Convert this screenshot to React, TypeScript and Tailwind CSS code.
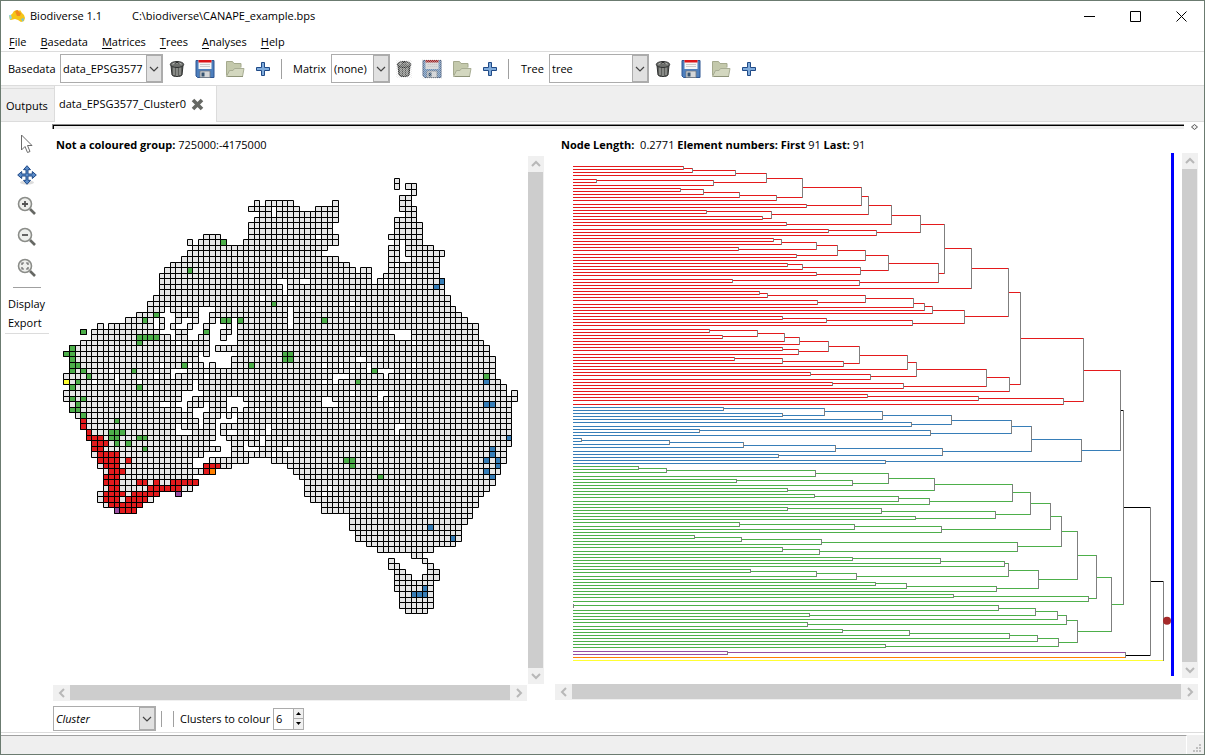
import { useState, type ReactNode } from 'react';

const COLORS = {
  red: '#e41a1c',
  blue: '#377eb8',
  green: '#4daf4a',
  purple: '#984ea3',
  orange: '#ff7f00',
  yellow: '#ffff33',
};

type ColorName = keyof typeof COLORS;

// One entry per grid row, north to south: half-open column ranges that hold cells
const MAP_ROWS = [
  '59-60',
  '59-60 61-63',
  '62-63',
  '60-62',
  '34-35 36-41 48-49 60-62',
  '33-37 38-42 45-49 60-63',
  '35-37 38-49 61-63',
  '34-49 59-63',
  '33-48 59-64',
  '33-48 59-64',
  '25-28 33-45 46-49 58-64',
  '22-23 24-29 32-49 59-60 61-64',
  '23-47 58-60 61-66',
  '22-46 58-60 61-68',
  '21-39 40-49 58-60 62-67',
  '19-51 58-59 60-67',
  '18-52 53-55 58-67',
  '17-55 57-67',
  '17-38 40-42 44-55 56-57 58-61 62-68',
  '17-39 40-68',
  '17-39 40-68',
  '16-35 36-40 41-69',
  '15-51 52-59 60-69',
  '15-18 19-21 22-24 27-40 41-44 45-70',
  '13-17 20-24 26-40 41-71',
  '11-16 17-18 20-21 23-24 26-27 28-30 31-40 41-72',
  '6-7 8-16 17-18 19-20 22-23 25-26 29-30 31-40 41-74',
  '3-4 5-17 20-22 25-26 28-30 31-58 62-74',
  '5-19 20-22 24-26 28-29 31-59 62-74',
  '3-20 21-26 31-56 57-62 63-75',
  '1-26 27-75 75-76',
  '0-24 25-26 31-76',
  '1-24 30-52 54-77',
  '1-17 18-22 23-25 26-27 30-46 47-49 50-54 55-62 63-77',
  '1-8 9-19 22-51 52-54 55-56 59-77',
  '0-9 10-16 17-19 20-25 26-48 51-57 58-61 62-77',
  '0-5 6-9 10-13 14-23 24-46 47-48 49-78',
  '1-23 24-79',
  '0-15 16-21 25-51 52-56 58-79 80-81',
  '0-21 23-29 32-35 36-46 48-56 57-81',
  '1-17 19-20 22-25 26-29 33-46 49-58 59-80',
  '1-21 22-23 26-29 30-31 32-34 35-80',
  '2-23 25-28 29-30 31-39 40-80',
  '3-21 22-24 25-27 31-80',
  '3-20 21-24 25-27 28-36 37-52 53-59 61-80',
  '4-20 23-27 28-29 31-33 34-36 37-59 60-80',
  '4-27 29-35 36-80',
  '5-26 30-32 33-35 36-80',
  '5-28 30-32 35-39 41-79',
  '5-25 30-37 38-54 55-79',
  '6-23 26-33 37-79',
  '6-23 25-30 40-78',
  '7-25 25-27 41-78',
  '7-23 42-77',
  '7-24 43-77',
  '7-23 43-47 48-60 61-76',
  '6-17 20-21 43-46 47-75',
  '6-16 44-74',
  '7-14 46-74',
  '9-13 46-73',
  '51-73',
  '51-72',
  '51-71',
  '52-71',
  '52-71',
  '54-70',
  '56-66',
  '62-64',
  '58-59 64-65',
  '58-60 65-66',
  '59-61 65-67',
  '59-62 64-67',
  '59-66',
  '59-66',
  '60-66',
  '60-66',
  '60-66',
  '61-65',
];

// row:col,col,... for every coloured cell
const MAP_COLORED: Record<ColorName, string> = {
  green:
    '11:28 16:22 22:37 24:16 25:14,28,29,31,46 27:3,25 28:13,14,15,16 29:13 30:1 31:0,1,39,40 32:1,39,40 33:1,2,21,33 34:1,3,12,55 35:4,75 36:2,52 37:1,13 39:1,3 40:2 41:1,2 42:3 43:9 45:8,9,10 46:8,9,13,14 47:9,11 48:14 50:50,51 51:51 53:56',
  blue: '18:67 19:66 36:75 40:75,76 46:79 48:76 49:76 50:75,77 51:77 52:75 53:76 62:65 64:69 73:64 74:62,63,64',
  red: '43:3 44:3 45:4 46:4,5,6 47:5,6,7 48:5,6 49:6,7,8,9 50:6,7,8,9,11 51:7,8,9,25,26,27 52:8,9,10,25 53:7,8,9 54:7,8,9,13,14,16,19,20,21,22,23 55:8,9,15,16,17,18,19,20 56:7,8,9,10,12,13,14,15,16 57:7,8,9,11,12,13,14 58:8,9,10,11,12,13 59:10,11,12',
  purple: '56:20 59:9',
  orange: '52:26',
  yellow: '36:0',
};

const colX = (c: number) => Math.floor(63.85 + 5.6 * c);
const rowY = (r: number) => Math.floor(178.25 + 5.585 * r);

function cellPath(r: number, c: number) {
  const x = colX(c);
  const y = rowY(r);
  return `M${x + 0.5} ${y + 0.5}H${colX(c + 1) + 0.5}V${rowY(r + 1) + 0.5}H${x + 0.5}Z`;
}

const basePath = MAP_ROWS.flatMap((row, r) =>
  row.split(' ').flatMap((range) => {
    const [from, to] = range.split('-').map(Number);
    return Array.from({ length: to - from }, (_, i) => cellPath(r, from + i));
  }),
).join('');

const coloredPaths = (Object.keys(MAP_COLORED) as ColorName[]).map((name) => ({
  name,
  d: MAP_COLORED[name]
    .split(' ')
    .flatMap((entry) => {
      const [r, cols] = entry.split(':');
      return cols.split(',').map((c) => cellPath(Number(r), Number(c)));
    })
    .join(''),
}));

// Clusters in postfix notation: "." is a leaf, a number joins the last two nodes at that x
const CLUSTERS: { color: ColorName; nodes: string }[] = [
  {
    color: 'red',
    nodes: `. . 683 . 692 . 735 . . 596 . 713 766 . . 680 . 703 . 739 . 776 802 . . 806 861
      . . 706 . . 762 771 868 . . 786 891 . . 828 . 876 920
      . . 773 . 781 . . 738 816 . . 796 837 . 865 . . 787 . 802 . . 816 860 888 . . 732 . 859 938 944
      . 971 . . 759 . 767 . . 817 865 . 913 . 924 . 932 . . 782 . 826 . 912 964 1008
      . . 709 . . 722 757 . 784 . 799 . . 782 . 798 828 . . 734 . 782 . 843 859 . 907
      . . 810 . 870 916 . . 832 . 903 986 . 1009 1020 . . 867 . 978 . 1063 1083`,
  },
  {
    color: 'blue',
    nodes: `. . 723 . . 782 824 . 882 . . 911 951 . . 699 . 930 1011
      . . 581 . 669 . 743 . 835 . . 778 942 1031 . . 885 1081`,
  },
  {
    color: 'green',
    nodes: `. . 638 . 666 . 815 . . 736 . 852 888 . . 787 934 . . 814 . 898 . 929 1012
      . . 787 . 881 . . 915 995 1030 . . 739 . 854 . 941 1050
      . . 694 . 741 . 821 . . 782 . 819 1017 1061 . . 852 . 940 . 1004
      . . 750 . 816 . 856 1008 . . 875 . 906 . 996 1038 1077 . . 953 . 1088 1096
      . . 573 . 998 . . 809 1035 . 1057 . . 807 1066
      . . 842 . 909 . 1009 . 1037 . . 885 1058 1077 1111`,
  },
  { color: 'purple', nodes: '. . 727' },
  { color: 'orange', nodes: '.' },
  { color: 'yellow', nodes: '.' },
];

const TREE_LEFT = 573;
const TREE_TOP = 166;
const TREE_BOTTOM = 660;

type TreeNode = { x: number; y: number; color: string };
type Segment = { d: string; color: string };

function buildTree() {
  const segments: Segment[] = [];
  const bars: Segment[] = [];
  const leafCount = CLUSTERS.reduce((n, c) => n + c.nodes.split('.').length - 1, 0);
  const step = (TREE_BOTTOM - TREE_TOP) / (leafCount - 1);
  let leaf = 0;

  const join = (a: TreeNode, b: TreeNode, x: number, color: string): TreeNode => {
    for (const child of [a, b]) {
      segments.push({ d: `M${child.x} ${Math.round(child.y) + 0.5}H${x}`, color: child.color });
    }
    bars.push({ d: `M${x + 0.5} ${Math.round(a.y)}V${Math.round(b.y) + 1}`, color: '#7f7f7f' });
    return { x, y: (a.y + b.y) / 2, color };
  };

  const [red, blue, green, purple, orange, yellow] = CLUSTERS.map((cluster) => {
    const color = COLORS[cluster.color];
    const stack: TreeNode[] = [];
    for (const token of cluster.nodes.split(/\s+/)) {
      if (token === '.') {
        stack.push({ x: TREE_LEFT, y: TREE_TOP + step * leaf++, color });
      } else {
        const b = stack.pop()!;
        const a = stack.pop()!;
        stack.push(join(a, b, Number(token), color));
      }
    }
    return stack[0];
  });

  const black = '#000000';
  const upper = join(join(red, blue, 1120, black), green, 1123, black);
  const lower = join(purple, orange, 1125, black);
  const root = join(join(upper, lower, 1150, black), yellow, 1163, black);
  return { lines: [...segments, ...bars], root };
}

const tree = buildTree();

function DitherOverlay({ width, height }: { width: number; height: number }) {
  return (
    <>
      <defs>
        <pattern id="dither" width="2" height="2" patternUnits="userSpaceOnUse">
          <path d="M0 0h1v1H0zM1 1h1v1H1z" fill="#ddd" fillOpacity="0.5" />
        </pattern>
      </defs>
      <rect width={width} height={height} fill="url(#dither)" />
    </>
  );
}

function TrashIcon({ disabled }: { disabled?: boolean }) {
  return (
    <svg width="16" height="18" viewBox="0 0 16 18">
      <path d="M2 5.5h12l-1 9.5c-1 2-9 2-10 0z" fill="#5c5e5b" stroke="#2e3030" />
      <path d="M5 7v8M8 7.5V16M11 7v8" stroke="#a5a7a3" strokeWidth="1.2" />
      <ellipse cx="8" cy="4.5" rx="6.7" ry="3" fill="#6d6f6c" stroke="#2e3030" />
      <path d="M3.5 4.2c1.5-1.5 7-1.7 9 0" stroke="#c3c5c2" fill="none" />
      <path d="M6 3.8c0-1.7 4-1.7 4 0" stroke="#222" fill="none" />
      {disabled && <DitherOverlay width={16} height={18} />}
    </svg>
  );
}

function SaveIcon({ disabled }: { disabled?: boolean }) {
  return (
    <svg width="20" height="20" viewBox="0 0 20 20">
      <path
        d="M1 1.5h18v17H2.5L1 17z"
        fill={disabled ? '#6b8fb8' : '#4d7fbd'}
        stroke={disabled ? '#4a5f80' : '#2d5591'}
      />
      <path d="M3.5 1h13v9h-13z" fill={disabled ? '#d8d8d8' : '#f5f5f5'} />
      <path d="M3.5 1h13v2.5h-13z" fill={disabled ? '#a02628' : '#dc1417'} />
      <path d="M5 5.5h10M5 7.5h10" stroke="#c9c9c9" />
      <path d="M5 12h10v6.5H5z" fill="#d4d6d8" stroke="#6f7780" strokeWidth="0.8" />
      <path d="M6.5 13.5h3v4h-3z" fill="#35526f" />
      {disabled && <DitherOverlay width={20} height={20} />}
    </svg>
  );
}

function FolderIcon() {
  return (
    <svg width="20" height="18" viewBox="0 0 20 18">
      <path d="M1.5 15.500v-14h6l1.500 2h7v4" fill="#c4c9ac" stroke="#a5aa8e" />
      <path d="M1.5 16.500l3-6h3.500l1.500-2h9.500l-1.500 8z" fill="#d3d7bf" stroke="#a8ad94" />
      <path d="M3 16.5h15" stroke="#8f9479" />
    </svg>
  );
}

function PlusIcon() {
  return (
    <svg width="14" height="14" viewBox="0 0 14 14">
      <path d="M5.5 0.5h3v5h5v3h-5v5h-3v-5h-5v-3h5z" fill="#7fabdb" stroke="#204a87" />
    </svg>
  );
}

function Chevron({ dir, weight = 1.2 }: { dir: 'up' | 'down' | 'left' | 'right'; weight?: number }) {
  const d = {
    up: 'M1 7l4-4 4 4',
    down: 'M1 3l4 4 4-4',
    left: 'M7 1L3 5l4 4',
    right: 'M3 1l4 4-4 4',
  }[dir];
  return (
    <svg width="10" height="10" viewBox="0 0 10 10" className="shrink-0">
      <path d={d} fill="none" stroke="currentColor" strokeWidth={weight} />
    </svg>
  );
}

function Combo({ id, value, className, label }: { id: string; value: string; className: string; label?: string }) {
  return (
    <div className={`relative shrink-0 border border-[#acacac] bg-white ${className}`}>
      <select id={id} aria-label={label} className="block h-full w-full appearance-none bg-transparent pr-4 pl-[2px] outline-none">
        <option>{value}</option>
      </select>
      <span className="pointer-events-none absolute inset-y-0 right-0 flex w-4 items-center justify-center border border-[#acacac] bg-[#e1e1e1] text-[#444]">
        <Chevron dir="down" />
      </span>
    </div>
  );
}

function ToolGroup({ name, value, labelClass, comboClass, disabled }: {
  name: string;
  value: string;
  labelClass: string;
  comboClass: string;
  disabled?: boolean;
}) {
  const id = `combo-${name.toLowerCase()}`;
  return (
    <div className="flex shrink-0 items-center">
      <label htmlFor={id} className={labelClass}>{name}</label>
      <Combo id={id} value={value} className={comboClass} />
      <button aria-label={`Delete ${name}`} disabled={disabled} className="flex w-7 justify-center"><TrashIcon disabled={disabled} /></button>
      <button aria-label={`Save ${name}`} disabled={disabled} className="flex w-7 justify-center"><SaveIcon disabled={disabled} /></button>
      <button aria-label={`Open ${name}`} className="flex w-8 justify-center"><FolderIcon /></button>
      <button aria-label={`New ${name}`} className="flex w-6 justify-center"><PlusIcon /></button>
    </div>
  );
}

function ToolSeparator() {
  return <span className="mx-[6px] h-5 w-px shrink-0 bg-[#a0a0a0]" />;
}

function VScroll() {
  return (
    <div className="flex w-4 shrink-0 flex-col bg-[#f0f0f0] text-[#b8b8b8]">
      <button aria-label="Scroll up" className="flex h-4 items-center justify-center"><Chevron dir="up" weight={2} /></button>
      <div className="mr-px flex-1 bg-[#cdcdcd]" />
      <button aria-label="Scroll down" className="flex h-4 items-center justify-center"><Chevron dir="down" weight={2} /></button>
    </div>
  );
}

function HScroll({ className }: { className: string }) {
  return (
    <div className={`flex h-4 bg-[#f0f0f0] text-[#b8b8b8] ${className}`}>
      <button aria-label="Scroll left" className="flex w-[17px] items-center justify-center"><Chevron dir="left" weight={2} /></button>
      <div className="mb-px flex-1 bg-[#cdcdcd]" />
      <button aria-label="Scroll right" className="flex w-[17px] items-center justify-center"><Chevron dir="right" weight={2} /></button>
    </div>
  );
}

function Magnifier({ children }: { children: ReactNode }) {
  return (
    <svg width="20" height="20" viewBox="0 0 20 20" fill="none">
      <path d="M13 13l5 5" stroke="#666864" strokeWidth="2.6" />
      <circle cx="8" cy="8" r="6.5" fill="#eeefec" stroke="#8b8d89" strokeWidth="1.6" />
      {children}
    </svg>
  );
}

const MODES = [
  {
    name: 'Select',
    icon: (
      <svg width="16" height="20" viewBox="0 0 16 20">
        <path d="M2.500 1v15l3.500-3.500 2.500 6 2.500-1-2.500-6H13z" fill="#fff" stroke="#6b6b6b" />
      </svg>
    ),
  },
  {
    name: 'Pan',
    icon: (
      <svg width="20" height="20" viewBox="0 0 20 20">
        <ellipse cx="10" cy="17.5" rx="7" ry="2" fill="#dcdcdc" />
        <path
          d="M10 .7l3.500 4H11v4.300h4.300V6.500l4 3.500-4 3.500V11H11v4.300h2.500l-3.500 4-3.500-4H9V11H4.700v2.500l-4-3.500 4-3.500V9H9V4.700H6.500z"
          fill="#5b8cc9"
          stroke="#204a87"
          strokeWidth="1"
        />
      </svg>
    ),
  },
  { name: 'Zoom in', icon: <Magnifier><path d="M5 8h6M8 5v6" stroke="#555" strokeWidth="1.8" /></Magnifier> },
  { name: 'Zoom out', icon: <Magnifier><path d="M5 8h6" stroke="#555" strokeWidth="1.8" /></Magnifier> },
  {
    name: 'Zoom fit',
    icon: <Magnifier><path d="M5 7V5h2M9 5h2v2M11 9v2H9M7 11H5V9" stroke="#666" strokeWidth="1.2" /></Magnifier>,
  },
];

function MapPane() {
  return (
    <section className="w-[491px] shrink-0">
      <p className="h-[27px] pl-[3px] leading-8">
        <b>Not a coloured group:</b> 725000:-4175000
      </p>
      <div className="flex">
        <svg className="block h-[528px] w-[475px]" viewBox="53 156 475 528">
          <path d={basePath} fill="#e6e6e6" stroke="#000" />
          {coloredPaths.map(({ name, d }) => (
            <path key={name} d={d} fill={COLORS[name]} stroke="#000" />
          ))}
        </svg>
        <VScroll />
      </div>
      <HScroll className="mt-px mr-[17px]" />
    </section>
  );
}

function TreePane() {
  return (
    <section className="min-w-0 flex-1">
      <p className="h-6 pl-[6px] leading-8">
        <b>Node Length:</b>&nbsp; 0.2771 <b>Element numbers: First</b> 91 <b>Last:</b> 91
      </p>
      <div className="flex justify-between">
        <svg className="block h-[525px] w-[625px]" viewBox="555 153 625 525">
          {tree.lines.map((line, i) => (
            <path key={i} d={line.d} stroke={line.color} fill="none" />
          ))}
          <circle cx={tree.root.x + 4} cy={tree.root.y + 0.5} r="4" fill="#a52a2a" />
          <rect x="1171" y="153" width="3" height="523" fill="#0000ff" />
        </svg>
        <VScroll />
      </div>
      <HScroll className="mt-[6px]" />
    </section>
  );
}

export default function App() {
  const [clusters, setClusters] = useState('6');

  return (
    <div className="flex min-h-screen flex-col border border-[#6b7b70] bg-white font-['Open_Sans','Noto_Sans',sans-serif] text-[11px] leading-4 text-black">
      <header className="flex h-[30px] items-center pl-2">
        <svg width="16" height="14" viewBox="0 0 16 14">
          <path d="M0 7l3-2 2-3 3-1 2 1 1-1 2 3 2 2 1 3-1 3-3 1-3-2-3-1-4 1-1 0z" fill="#f5c518" />
          <path d="M6 2l3-1 1 2 2 1-1 3-3 0z" fill="#f08a1d" />
          <path d="M0 6l2 0 1 3-2 2z" fill="#8fd7e8" />
          <path d="M12 10l3-1-1 4z" fill="#6cc3de" />
        </svg>
        <h1 className="ml-[5px] w-[102px]">Biodiverse 1.1</h1>
        <span>C:\biodiverse\CANAPE_example.bps</span>
        <div className="ml-auto flex">
          <button aria-label="Minimize" className="flex h-[29px] w-[46px] items-center justify-center">
            <svg width="11" height="11"><path d="M0 5.5h11" stroke="#000" /></svg>
          </button>
          <button aria-label="Maximize" className="flex h-[29px] w-[46px] items-center justify-center">
            <svg width="11" height="11"><path d="M.5.5h10v10h-10z" stroke="#000" fill="none" /></svg>
          </button>
          <button aria-label="Close" className="flex h-[29px] w-[46px] items-center justify-center">
            <svg width="11" height="11"><path d="M.5.5l10 10M10.5.5l-10 10" stroke="#000" /></svg>
          </button>
        </div>
      </header>

      <nav className="flex h-[21px] items-center gap-[14px] border-b border-[#dcdcdc] pt-px pl-2">
        {['File', 'Basedata', 'Matrices', 'Trees', 'Analyses', 'Help'].map((item) => (
          <button key={item}>
            <span className="underline underline-offset-2">{item[0]}</span>
            {item.slice(1)}
          </button>
        ))}
      </nav>

      <div className="flex h-[34px] items-center border-b border-[#dcdcdc] pl-[7px]">
        <ToolGroup name="Basedata" value="data_EPSG3577" labelClass="w-[52px]" comboClass="h-[29px] w-[103px]" />
        <ToolSeparator />
        <ToolGroup name="Matrix" value="(none)" labelClass="w-[43px] pl-[5px]" comboClass="h-[29px] w-[59px]" disabled />
        <ToolSeparator />
        <ToolGroup name="Tree" value="tree" labelClass="w-[34px] pl-[6px]" comboClass="h-[29px] w-[100px]" />
      </div>

      <div className="flex h-9 border-b border-[#dcdcdc] bg-[#efefef]">
        <button className="mt-[2px] w-[53px] border-t border-[#dcdcdc] pt-px pl-[5px] text-left">Outputs</button>
        <div className="-mb-px flex w-[163px] items-center border-x border-[#dcdcdc] bg-white pl-1">
          <button className="w-[132px] text-left">data_EPSG3577_Cluster0</button>
          <button aria-label="Close tab">
            <svg width="13" height="13" viewBox="0 0 13 13">
              <path d="M2 2l9 9M11 2l-9 9" stroke="#666864" strokeWidth="3.6" />
            </svg>
          </button>
        </div>
      </div>

      <main className="flex">
        <aside className="flex w-[51px] shrink-0 flex-col items-center pt-[6px]">
          {MODES.map((mode) => (
            <button key={mode.name} aria-label={mode.name} className="flex h-[31px] w-full items-center justify-center">
              {mode.icon}
            </button>
          ))}
          <hr className="mt-1 w-7 border-[#a0a0a0]" />
          <button className="mt-2 w-full pl-[7px] text-left">Display</button>
          <button className="mt-[3px] w-full pl-[7px] text-left">Export</button>
          <hr className="mt-[2px] w-11 border-[#dcdcdc]" />
        </aside>

        <div className="min-w-0 flex-1">
          <div className="flex h-[7px] pt-[2px]">
            <div className="h-[5px] flex-1 border-t border-l border-[#8a8a8a]">
              <div className="h-1 border-t border-l border-black bg-[#efefef]" />
            </div>
            <button aria-label="Toggle parameters" className="flex w-5 items-center justify-center">
              <svg width="7" height="6" viewBox="0 0 7 6">
                <path d="M.5 3L3.5.5l3 2.500-3 2.500z" fill="#eee" stroke="#555" />
              </svg>
            </button>
          </div>
          <div className="flex gap-[11px] pr-[6px] pl-px">
            <MapPane />
            <TreePane />
          </div>
          <div className="flex h-[31px] items-center pt-1 pl-px">
            <Combo id="plot-mode" label="Plot mode" value="Cluster" className="h-[25px] w-[103px] italic" />
            <span className="ml-[5px] h-4 w-px bg-[#a0a0a0]" />
            <span className="ml-[11px] h-4 w-px bg-[#a0a0a0]" />
            <label htmlFor="cluster-count" className="w-[99px] pl-[6px] whitespace-nowrap">Clusters to colour</label>
            <div className="flex h-[22px] w-[31px] border border-[#acacac] bg-white">
              <input
                id="cluster-count"
                value={clusters}
                onChange={(e) => setClusters(e.target.value)}
                className="w-5 min-w-0 border-r border-[#acacac] pl-[2px] outline-none"
              />
              <div className="flex flex-1 flex-col divide-y divide-[#acacac] bg-[#f0f0f0]">
                <button aria-label="More" className="flex flex-1 items-center justify-center" onClick={() => setClusters(String(Number(clusters) + 1))}>
                  <svg width="5" height="3"><path d="M0 3l2.500-3L5 3z" /></svg>
                </button>
                <button aria-label="Fewer" className="flex flex-1 items-center justify-center" onClick={() => setClusters(String(Number(clusters) - 1))}>
                  <svg width="5" height="3"><path d="M0 0l2.500 3L5 0z" /></svg>
                </button>
              </div>
            </div>
          </div>
        </div>
      </main>

      <footer className="mt-auto border-t border-[#dcdcdc] pt-[2px]">
        <div className="flex h-[19px] bg-[#efefef]">
          <div className="flex-1 border-t border-r border-t-[#a0a0a0] border-r-white" />
          <svg width="17" height="19" viewBox="0 0 17 19">
            <path d="M12 9h2v2h-2zM9 12h2v2H9zM12 12h2v2h-2zM6 15h2v2H6zM9 15h2v2H9zM12 15h2v2h-2z" fill="#bfbfbf" />
          </svg>
        </div>
      </footer>
    </div>
  );
}
